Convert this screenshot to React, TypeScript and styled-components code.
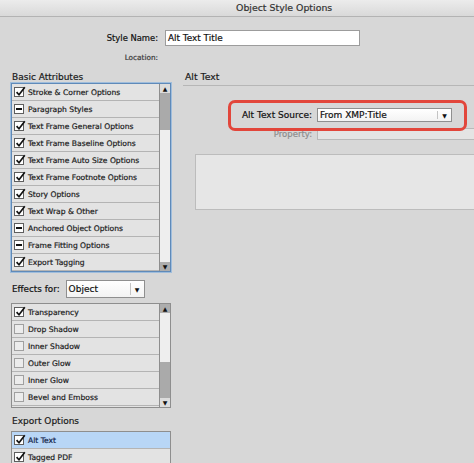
import React from "react";
import styled, { createGlobalStyle } from "styled-components";

const Global = createGlobalStyle`
  html, body { margin: 0; padding: 0; background: #d7d7d7; }
  body {
    font-family: "DejaVu Sans", "Liberation Sans", sans-serif;
    -webkit-text-stroke: 0.2px currentColor;
  }
`;

const Window = styled.div`
  width: 474px;
  height: 463px;
  overflow: hidden;
  background: #d7d7d7;
  color: #111;
  display: flex;
  flex-direction: column;
`;

const TitleBar = styled.div`
  height: 16px;
  flex: none;
  background: linear-gradient(#ececec, #d9d9d9);
  border-bottom: 1px solid #b3b3b3;
  font-size: 9.4px;
  line-height: 16px;
  color: #333;
  padding-left: 236px;
  white-space: nowrap;
`;

const HeaderGrid = styled.div`
  display: grid;
  grid-template-columns: 158px 195px;
  column-gap: 7px;
  row-gap: 6px;
  margin-top: 13px;
  align-items: center;
`;

const FieldLabel = styled.div<{ $size?: number; $tone?: string }>`
  text-align: right;
  font-size: ${(p) => p.$size ?? 8.3}px;
  color: ${(p) => p.$tone ?? "#111"};
  white-space: nowrap;
`;

const TextInput = styled.div`
  height: 16px;
  box-sizing: border-box;
  background: #fff;
  border: 1px solid #9c9c9c;
  font-size: 8.9px;
  line-height: 14px;
  padding-left: 2px;
  white-space: nowrap;
`;

const Spacer = styled.div`
  height: 10px;
`;

const Main = styled.div`
  display: flex;
  margin-top: 9px;
`;

const LeftColumn = styled.div`
  width: 160px;
  margin-left: 11px;
  display: flex;
  flex-direction: column;
  flex: none;
`;

const SectionHeading = styled.div<{ $top?: number }>`
  height: 12px;
  line-height: 12px;
  font-size: 9px;
  padding-left: 1px;
  margin-top: ${(p) => p.$top ?? 0}px;
  white-space: nowrap;
  color: #1a1a1a;
`;

const ListBox = styled.div<{ $focus?: boolean; $height: number; $top?: number }>`
  height: ${(p) => p.$height}px;
  box-sizing: border-box;
  margin-top: ${(p) => p.$top ?? 0}px;
  border: 1px solid ${(p) => (p.$focus ? "#5f8ab9" : "#8e8e8e")};
  box-shadow: ${(p) => (p.$focus ? "0 0 0 1px #9fbddc" : "none")};
  display: flex;
  background: #e3e3e3;
  overflow: hidden;
  flex: none;
`;

const Rows = styled.div`
  flex: 1;
  display: flex;
  flex-direction: column;
  min-width: 0;
`;

const Row = styled.div<{ $selected?: boolean }>`
  height: 17px;
  flex: none;
  box-sizing: border-box;
  border-bottom: 1px solid #b4b4b4;
  background: ${(p) => (p.$selected ? "#b8d6f6" : "#e3e3e3")};
  color: ${(p) => (p.$selected ? "#14254a" : "#1c1c1c")};
  display: flex;
  align-items: center;
  gap: 4px;
  padding-left: 2px;
  font-size: 7.6px;
  white-space: nowrap;
`;

const Box = styled.div<{ $empty?: boolean }>`
  width: 10px;
  height: 10px;
  box-sizing: border-box;
  border: 1px solid ${(p) => (p.$empty ? "#a0a0a0" : "#5e5e5e")};
  background: ${(p) => (p.$empty ? "#ececec" : "#fff")};
  display: flex;
  align-items: center;
  justify-content: center;
  position: relative;
  flex: none;
`;

const Dash = styled.div`
  width: 6px;
  height: 2px;
  background: #111;
`;

const CheckSvg = styled.svg`
  position: absolute;
  left: 0px;
  top: -2px;
`;

type Mark = "check" | "mixed" | "empty";

const CheckBox = ({ mark }: { mark: Mark }) => (
  <Box $empty={mark === "empty"}>
    {mark === "mixed" && <Dash />}
    {mark === "check" && (
      <CheckSvg width="11" height="11" viewBox="0 0 11 11">
        <path d="M1.6 6.2 L4 8.8 L9.8 1.2" fill="none" stroke="#111" strokeWidth="1.7" />
      </CheckSvg>
    )}
  </Box>
);

const ScrollBar = styled.div`
  width: 10px;
  flex: none;
  border-left: 1px solid #8e8e8e;
  display: flex;
  flex-direction: column;
  background: #ededed;
  -webkit-text-stroke: 0;
`;

const Arrow = styled.div<{ $h: number; $dark?: boolean }>`
  height: ${(p) => p.$h}px;
  flex: none;
  background: ${(p) => (p.$dark ? "#adadad" : "#dcdcdc")};
  font-size: 6px;
  line-height: ${(p) => p.$h}px;
  text-align: center;
  color: #111;
  box-sizing: border-box;
`;

const Segment = styled.div<{ $dark?: boolean; $size?: number }>`
  background: ${(p) => (p.$dark ? "#aaaaaa" : "#eeeeee")};
  ${(p) => (p.$size ? `height: ${p.$size}px; flex: none;` : "flex: 1;")}
`;

type Seg = { dark?: boolean; size?: number };

const Scroll = ({ segs, topDark, bottomDark }: { segs: Seg[]; topDark?: boolean; bottomDark?: boolean }) => (
  <ScrollBar>
    <Arrow $h={9} $dark={topDark}>▲</Arrow>
    {segs.map((s, i) => (
      <Segment key={i} $dark={s.dark} $size={s.size} />
    ))}
    <Arrow $h={9} $dark={bottomDark}>▼</Arrow>
  </ScrollBar>
);

const EffectsRow = styled.div`
  display: flex;
  align-items: center;
  gap: 6px;
  margin-top: 8px;
  height: 18px;
  padding-left: 1px;
`;

const EffectsLabel = styled.div`
  font-size: 8.8px;
  white-space: nowrap;
`;

const Select = styled.div<{ $w: number; $h: number }>`
  width: ${(p) => p.$w}px;
  height: ${(p) => p.$h}px;
  box-sizing: border-box;
  border: 1px solid #8f8f8f;
  background: linear-gradient(#ffffff, #f3f3f3);
  display: flex;
  align-items: stretch;
  font-size: 9px;
  flex: none;
`;

const SelectText = styled.div`
  flex: 1;
  padding-left: 2px;
  display: flex;
  align-items: center;
  white-space: nowrap;
`;

const SelectArrow = styled.div`
  width: 13px;
  border-left: 1px solid #c4c4c4;
  margin: 2px 0;
  display: flex;
  align-items: center;
  justify-content: center;
  font-size: 6px;
  color: #111;
  -webkit-text-stroke: 0;
`;

const RightColumn = styled.div`
  flex: 1;
  margin-left: 12px;
  display: flex;
  flex-direction: column;
  min-width: 0;
`;

const RightHeading = styled.div`
  height: 14px;
  line-height: 12px;
  font-size: 9.3px;
  padding-left: 2px;
  border-bottom: 1px solid #b6b6b6;
  white-space: nowrap;
  color: #1a1a1a;
`;

const FormGrid = styled.div`
  display: grid;
  grid-template-columns: 129px 1fr;
  column-gap: 5px;
  row-gap: 6px;
  margin-top: 22px;
  align-items: center;
`;

const SourceLabelCell = styled.div`
  position: relative;
  text-align: right;
  font-size: 9px;
  white-space: nowrap;
`;

const Highlight = styled.div`
  position: absolute;
  left: 45px;
  top: -10px;
  width: 239px;
  height: 31px;
  box-sizing: border-box;
  border: 3px solid #e2463b;
  border-radius: 7px;
  pointer-events: none;
`;

const PropertyInput = styled.div`
  height: 12px;
  width: 200px;
  box-sizing: border-box;
  border: 1px solid #b9b9b9;
  background: #e4e4e4;
`;

const TextArea = styled.div`
  margin-top: 14px;
  margin-left: 12px;
  height: 56px;
  width: 320px;
  box-sizing: border-box;
  border: 1px solid #bcbcbc;
  background: #e6e6e6;
`;

const basic: [Mark, string][] = [
  ["check", "Stroke & Corner Options"],
  ["mixed", "Paragraph Styles"],
  ["check", "Text Frame General Options"],
  ["check", "Text Frame Baseline Options"],
  ["check", "Text Frame Auto Size Options"],
  ["check", "Text Frame Footnote Options"],
  ["check", "Story Options"],
  ["check", "Text Wrap & Other"],
  ["mixed", "Anchored Object Options"],
  ["mixed", "Frame Fitting Options"],
  ["check", "Export Tagging"],
];

const effects: [Mark, string][] = [
  ["check", "Transparency"],
  ["empty", "Drop Shadow"],
  ["empty", "Inner Shadow"],
  ["empty", "Outer Glow"],
  ["empty", "Inner Glow"],
  ["empty", "Bevel and Emboss"],
];

const exportsList: [Mark, string][] = [
  ["check", "Alt Text"],
  ["check", "Tagged PDF"],
];

export default function App() {
  return (
    <>
      <Global />
      <Window>
        <TitleBar>Object Style Options</TitleBar>
        <HeaderGrid>
          <FieldLabel $size={8.4}>Style Name:</FieldLabel>
          <TextInput>Alt Text Title</TextInput>
          <FieldLabel $size={7.3} $tone="#3a3a3a">Location:</FieldLabel>
          <Spacer />
        </HeaderGrid>
        <Main>
          <LeftColumn>
            <SectionHeading>Basic Attributes</SectionHeading>
            <ListBox $focus $height={189}>
              <Rows>
                {basic.map(([m, t]) => (
                  <Row key={t}>
                    <CheckBox mark={m} />
                    {t}
                  </Row>
                ))}
              </Rows>
              <Scroll segs={[{ dark: true, size: 37 }, {}]} bottomDark />
            </ListBox>
            <EffectsRow>
              <EffectsLabel>Effects for:</EffectsLabel>
              <Select $w={79} $h={18}>
                <SelectText>Object</SelectText>
                <SelectArrow>▼</SelectArrow>
              </Select>
            </EffectsRow>
            <ListBox $height={105} $top={5}>
              <Rows>
                {effects.map(([m, t]) => (
                  <Row key={t}>
                    <CheckBox mark={m} />
                    {t}
                  </Row>
                ))}
              </Rows>
              <Scroll segs={[{ size: 49 }, { dark: true }]} topDark />
            </ListBox>
            <SectionHeading $top={7}>Export Options</SectionHeading>
            <ListBox $height={40} $top={4}>
              <Rows>
                {exportsList.map(([m, t], i) => (
                  <Row key={t} $selected={i === 0}>
                    <CheckBox mark={m} />
                    {t}
                  </Row>
                ))}
              </Rows>
            </ListBox>
          </LeftColumn>
          <RightColumn>
            <RightHeading>Alt Text</RightHeading>
            <FormGrid>
              <SourceLabelCell>
                Alt Text Source:
                <Highlight />
              </SourceLabelCell>
              <Select $w={135} $h={14}>
                <SelectText>From XMP:Title</SelectText>
                <SelectArrow>▼</SelectArrow>
              </Select>
              <FieldLabel $size={8.5} $tone="#8d8d8d">Property:</FieldLabel>
              <PropertyInput />
            </FormGrid>
            <TextArea />
          </RightColumn>
        </Main>
      </Window>
    </>
  );
}
